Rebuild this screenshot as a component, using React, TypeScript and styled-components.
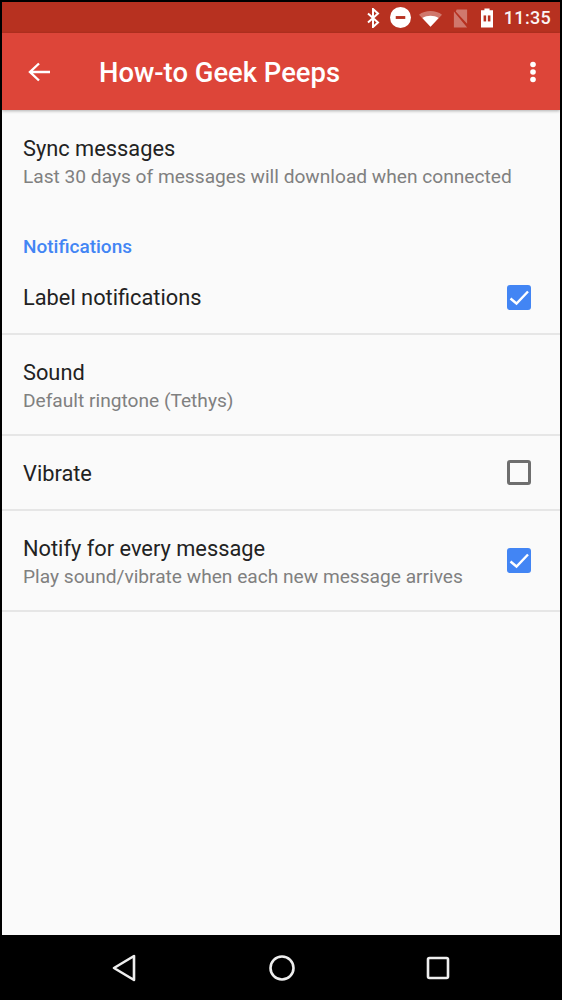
import React from 'react';
import styled, { createGlobalStyle } from 'styled-components';

const GlobalStyle = createGlobalStyle`
  html, body {
    margin: 0;
    padding: 0;
    background: #000;
  }
  body {
    font-family: Roboto, "Liberation Sans", sans-serif;
  }
`;

const Phone = styled.div`
  width: 562px;
  height: 1000px;
  box-sizing: border-box;
  padding: 2px 2px 0 2px;
  background: #000;
  display: flex;
  flex-direction: column;
  overflow: hidden;
`;

const StatusBar = styled.div`
  height: 31px;
  flex: none;
  background: #b73120;
  display: flex;
  align-items: center;
  justify-content: flex-end;
  padding-right: 9px;
  color: #fff;
`;

const StatusIcon = styled.svg<{ $gap?: number }>`
  display: block;
  flex: none;
  margin-right: ${(p) => p.$gap ?? 0}px;
`;

const Clock = styled.span`
  font-size: 18px;
  font-weight: 500;
  letter-spacing: 0.3px;
  opacity: 0.95;
`;

const AppBar = styled.div`
  height: 77px;
  flex: none;
  background: #dd4539;
  display: flex;
  align-items: center;
  box-shadow: 0 1px 3px rgba(0, 0, 0, 0.3);
  position: relative;
  z-index: 1;
  color: #fff;
`;

const BackButton = styled.div`
  width: 97px;
  flex: none;
  display: flex;
  padding-left: 25px;
  box-sizing: border-box;
`;

const Title = styled.h1`
  flex: 1;
  margin: 0;
  padding-top: 2px;
  font-size: 27.4px;
  font-weight: 500;
  color: #fff;
`;

const MoreButton = styled.div`
  width: 30px;
  margin-right: 12px;
  flex: none;
  display: flex;
  justify-content: center;
`;

const Content = styled.div`
  flex: 1;
  background: #fafafa;
  display: flex;
  flex-direction: column;
`;

const Row = styled.div<{ $height: number; $divider?: boolean }>`
  height: ${(p) => p.$height}px;
  box-sizing: border-box;
  flex: none;
  padding: 0 29px 0 21px;
  display: flex;
  align-items: center;
  justify-content: space-between;
  border-bottom: ${(p) => (p.$divider ? '2px solid #e6e6e6' : 'none')};
`;

const RowText = styled.div`
  display: flex;
  flex-direction: column;
  gap: 5px;
`;

const RowTitle = styled.div`
  padding-top: 2px;
  font-size: 21.8px;
  line-height: 24px;
  color: #222;
`;

const RowSub = styled.div`
  font-size: 19.15px;
  line-height: 21px;
  color: #808080;
`;

const SectionHeader = styled.div`
  height: 27px;
  flex: none;
  margin-top: 22px;
  padding-left: 21px;
  font-size: 19px;
  font-weight: 500;
  line-height: 26px;
  color: #4285f4;
`;

const Box = styled.div<{ $checked?: boolean }>`
  width: 24px;
  height: 25px;
  box-sizing: border-box;
  flex: none;
  border-radius: 3px;
  display: flex;
  align-items: center;
  justify-content: center;
  background: ${(p) => (p.$checked ? '#4285f4' : 'transparent')};
  border: ${(p) => (p.$checked ? 'none' : '3px solid #6e6e6e')};
`;

const NavBar = styled.div`
  height: 65px;
  flex: none;
  margin: 0 -2px;
  background: #000;
  display: flex;
  align-items: center;
`;

const NavSlot = styled.div<{ $left: number }>`
  margin-left: ${(p) => p.$left}px;
  display: flex;
`;

const Checkbox = ({ checked }: { checked?: boolean }) => (
  <Box $checked={checked}>
    {checked && (
      <svg width="24" height="25" viewBox="0 0 24 25" fill="none">
        <path d="M3.500 13.500L9.500 18.500 21 6.500" stroke="#fff" strokeWidth="2.400" />
      </svg>
    )}
  </Box>
);

export default function App() {
  return (
    <Phone>
      <GlobalStyle />
      <StatusBar>
        <StatusIcon $gap={10} width="14" height="20" viewBox="0 0 14 20" fill="none">
          <path d="M2 5.500l10 9-5 4.500V1l5 4.500-10 9" stroke="#fff" strokeWidth="2" />
        </StatusIcon>
        <StatusIcon $gap={8} width="21" height="21" viewBox="0 0 22 22">
          <circle cx="11" cy="11" r="11" fill="#fff" />
          <rect x="6" y="9.500" width="10" height="3" fill="#b73120" />
        </StatusIcon>
        <StatusIcon $gap={10} width="23" height="18" viewBox="0 0 24 18">
          <path d="M0 5.500C6.500.5 17.500.5 24 5.500L12 18z" fill="#fff" opacity="0.35" />
          <path d="M3.500 9c4.800-3.300 12.200-3.300 17 0L12 18z" fill="#fff" />
        </StatusIcon>
        <StatusIcon $gap={12} width="17" height="20" viewBox="0 0 18 20">
          <path d="M5 1h11v15L4 3zM2 3l14 17H2z" fill="#fff" opacity="0.35" />
        </StatusIcon>
        <StatusIcon $gap={11} width="12" height="22" viewBox="0 0 14 22">
          <path d="M4 0h6v2h4v20H0V2h4z" fill="#fff" />
          <rect x="3" y="8" width="3" height="7" fill="#b73120" />
          <rect x="8" y="8" width="3" height="7" fill="#b73120" />
        </StatusIcon>
        <Clock>11:35</Clock>
      </StatusBar>
      <AppBar>
        <BackButton>
          <svg width="24" height="24" viewBox="0 0 24 24" fill="none">
            <path d="M23 12H3M12 3.500L3 12l9 8.500" stroke="#fff" strokeWidth="2.400" />
          </svg>
        </BackButton>
        <Title>How-to Geek Peeps</Title>
        <MoreButton>
          <svg width="8" height="24" viewBox="0 0 8 24" fill="#fff">
            <circle cx="4" cy="4.500" r="2.800" />
            <circle cx="4" cy="12" r="2.800" />
            <circle cx="4" cy="19.500" r="2.800" />
          </svg>
        </MoreButton>
      </AppBar>
      <Content>
        <Row $height={102}>
          <RowText>
            <RowTitle>Sync messages</RowTitle>
            <RowSub>Last 30 days of messages will download when connected</RowSub>
          </RowText>
        </Row>
        <SectionHeader>Notifications</SectionHeader>
        <Row $height={74} $divider>
          <RowTitle>Label notifications</RowTitle>
          <Checkbox checked />
        </Row>
        <Row $height={101} $divider>
          <RowText>
            <RowTitle>Sound</RowTitle>
            <RowSub>Default ringtone (Tethys)</RowSub>
          </RowText>
        </Row>
        <Row $height={75} $divider>
          <RowTitle>Vibrate</RowTitle>
          <Checkbox />
        </Row>
        <Row $height={101} $divider>
          <RowText>
            <RowTitle>Notify for every message</RowTitle>
            <RowSub>Play sound/vibrate when each new message arrives</RowSub>
          </RowText>
          <Checkbox checked />
        </Row>
      </Content>
      <NavBar>
        <NavSlot $left={112}>
          <svg width="24" height="28" viewBox="0 0 24 28" fill="none">
            <path d="M22 2v24L2 14z" stroke="#eee" strokeWidth="2.600" strokeLinejoin="round" />
          </svg>
        </NavSlot>
        <NavSlot $left={133}>
          <svg width="26" height="26" viewBox="0 0 26 26" fill="none">
            <circle cx="13" cy="13" r="11.500" stroke="#eee" strokeWidth="2.600" />
          </svg>
        </NavSlot>
        <NavSlot $left={131}>
          <svg width="24" height="24" viewBox="0 0 24 24" fill="none">
            <rect x="2" y="2" width="20" height="20" rx="1.500" stroke="#eee" strokeWidth="2.600" />
          </svg>
        </NavSlot>
      </NavBar>
    </Phone>
  );
}
